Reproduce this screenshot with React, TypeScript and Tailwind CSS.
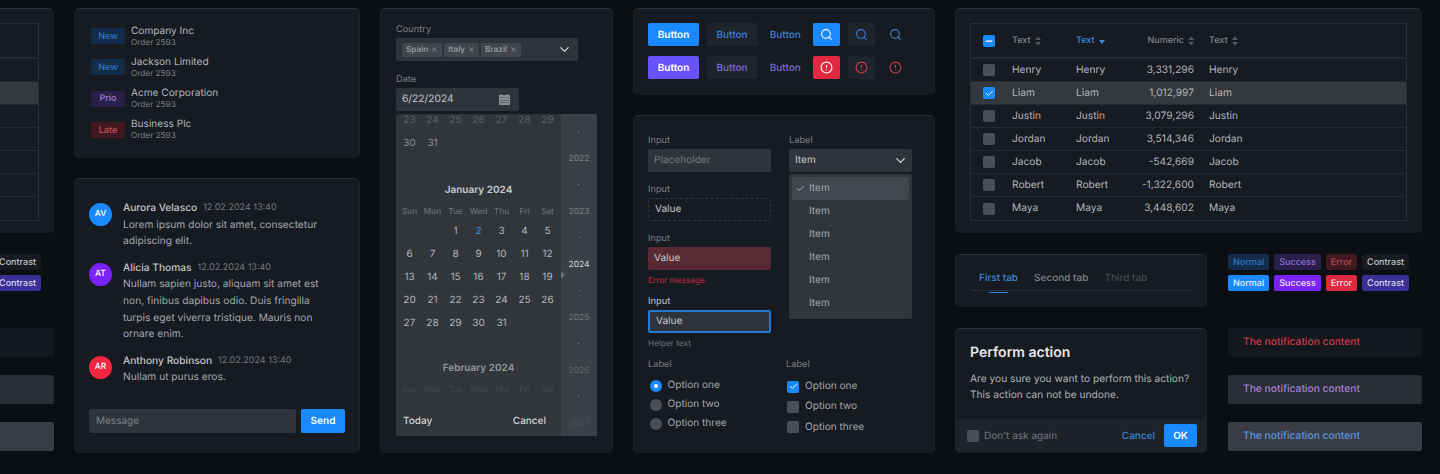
import { Check, ChevronDown, CircleAlert, Minus, Search, X } from "lucide-react";

const card = "rounded-[5px] border border-[#1f2329] border-t-[#2c3036] border-b-[#191d23] bg-[#161a21]";

const people = [
  ["Henry", "3,331,296"],
  ["Liam", "1,012,997"],
  ["Justin", "3,079,296"],
  ["Jordan", "3,514,346"],
  ["Jacob", "-542,669"],
  ["Robert", "-1,322,600"],
  ["Maya", "3,448,602"],
];

function SortIcon() {
  return (
    <svg width="6" height="10" viewBox="0 0 6 10" className="ml-[4px]" fill="#565b62">
      <path d="M3 0.5 6 4H0zM3 9.5 0 6h6z" />
    </svg>
  );
}

function CheckBox({ state, className = "" }: { state?: "on" | "mixed"; className?: string }) {
  return (
    <span
      className={`flex h-[12px] w-[12px] shrink-0 items-center justify-center rounded-[2px] ${
        state ? "bg-[#1a88ff]" : "bg-[#4a4e56]"
      } ${className}`}
    >
      {state === "on" && <Check size={9} strokeWidth={2.5} className="text-white" />}
      {state === "mixed" && <Minus size={10} strokeWidth={3} className="text-white" />}
    </span>
  );
}

function TableCard() {
  return (
    <div className={`${card} px-[14px] pt-[14px] pb-[14px] h-[225px]`}>
      <div className="border border-[#2a2e34] text-[10.2px] text-[#b3b6bb]">
        <div className="grid h-[35px] grid-cols-[41px_64px_60px_73px_1fr] items-center border-b-2 border-[#262a30] text-[9px] font-medium text-[#7f848b]">
          <span className="pl-[12px]">
            <CheckBox state="mixed" />
          </span>
          <span className="flex items-center">
            Text
            <SortIcon />
          </span>
          <span className="flex items-center text-[#3e8ae0]">
            Text
            <svg width="6" height="6" viewBox="0 0 6 6" className="mt-[3px] ml-[4px]" fill="#3e8ae0">
              <path d="M0 1h6L3 5z" />
            </svg>
          </span>
          <span className="col-span-1 flex items-center justify-end pr-[15px] whitespace-nowrap">
            Numeric
            <SortIcon />
          </span>
          <span className="flex items-center">
            Text
            <SortIcon />
          </span>
        </div>
        {people.map(([name, value], i) => (
          <div
            key={name}
            className={`grid h-[23px] grid-cols-[41px_64px_60px_73px_1fr] items-center ${
              i < people.length - 1 ? "border-b border-[#262a30]" : ""
            } ${i === 1 ? "bg-[#33383c]" : ""}`}
          >
            <span className="pl-[12px]">
              <CheckBox state={i === 1 ? "on" : undefined} />
            </span>
            <span className="pt-[1px]">{name}</span>
            <span className="pt-[1px]">{name}</span>
            <span className="pt-[1px] pr-[15px] text-right whitespace-nowrap">{value}</span>
            <span className="pt-[1px]">{name}</span>
          </div>
        ))}
      </div>
    </div>
  );
}

function Tags() {
  const base = "flex h-[16px] items-center rounded-[2px] px-[5px] pt-[1px] text-[9px] font-medium";
  return (
    <div className="flex flex-col gap-[5px]">
      <div className="flex gap-[5px]">
        <span className={`${base} bg-[#132c4b] text-[#2f76c4]`}>Normal</span>
        <span className={`${base} bg-[#2a1f4a] text-[#8a6fd1]`}>Success</span>
        <span className={`${base} bg-[#41191f] text-[#b24a57]`}>Error</span>
        <span className={`${base} bg-[#171a20] text-[#c2c4c7]`}>Contrast</span>
      </div>
      <div className="flex gap-[5px]">
        <span className={`${base} bg-[#1a88ff] text-[#e8f2ff]`}>Normal</span>
        <span className={`${base} bg-[#7b22fb] text-[#eee3ff]`}>Success</span>
        <span className={`${base} bg-[#e0283f] text-[#fbdde1]`}>Error</span>
        <span className={`${base} bg-[#3c2f93] text-[#d9d5f0]`}>Contrast</span>
      </div>
    </div>
  );
}

function Notifications() {
  const base = "flex h-[29px] items-center rounded-[2px] pt-[1px] pl-[15px] text-[10.25px] font-medium";
  return (
    <div className="mt-[37px] flex flex-col gap-[18px]">
      <div className={`${base} bg-[#14171e] text-[#c93b4c]`}>The notification content</div>
      <div className={`${base} bg-[#2a2d33] text-[#a480d8]`}>The notification content</div>
      <div className={`${base} bg-[#3a3d46] text-[#5b95e0]`}>The notification content</div>
    </div>
  );
}

function TabsCard() {
  return (
    <div className={`${card} h-[53px] px-[15px] pt-[13px]`}>
      <div className="flex h-[23px] gap-[16px] border-b border-[#2a2e34] pl-[8px] text-[10px] leading-[20px] font-medium">
        <span className="relative text-[#3a88dd]">
          First tab
          <span className="absolute right-[10px] -bottom-[3px] left-[10px] h-[1px] bg-[#2d82dc]" />
        </span>
        <span className="text-[#7b8087]">Second tab</span>
        <span className="text-[#474b52]">Third tab</span>
      </div>
    </div>
  );
}

function DialogCard() {
  return (
    <div className={`${card} flex h-[125px] flex-col overflow-hidden`}>
      <div className="flex-1 px-[14px] pt-[14px]">
        <h3 className="text-[14px] leading-[20px] font-semibold text-[#e6e7e8]">Perform action</h3>
        <p className="mt-[8px] text-[10.2px] leading-[16px] text-[#b0b3b8]">
          Are you sure you want to perform this action?
          <br />
          This action can not be undone.
        </p>
      </div>
      <div className="flex h-[33px] items-center bg-[#1e2229] pr-[9px] pl-[11px] text-[10px]">
        <CheckBox />
        <span className="ml-[5px] pt-[1px] text-[#71767d]">Don't ask again</span>
        <span className="ml-auto pt-[1px] font-medium text-[#3a82d6]">Cancel</span>
        <span className="ml-[9px] flex h-[23px] w-[33px] items-center justify-center rounded-[2px] bg-[#1a88ff] pt-[1px] font-semibold text-white">
          OK
        </span>
      </div>
    </div>
  );
}

function TableColumn() {
  return (
    <div className="flex w-[467px] shrink-0 flex-col gap-[21px]">
      <TableCard />
      <div className="flex gap-[21px]">
        <div className="flex w-[252px] shrink-0 flex-col gap-[21px]">
          <TabsCard />
          <DialogCard />
        </div>
        <div className="flex-1">
          <Tags />
          <Notifications />
        </div>
      </div>
    </div>
  );
}

const orders = [
  ["New", "Company Inc", "bg-[#132c4b] text-[#2f76c4]"],
  ["New", "Jackson Limited", "bg-[#132c4b] text-[#2f76c4]"],
  ["Prio", "Acme Corporation", "bg-[#2a1f4a] text-[#a07fd8]"],
  ["Late", "Business Plc", "bg-[#41191f] text-[#c9505e]"],
];

const messages = [
  {
    initials: "AV",
    color: "bg-[#1a88ff]",
    name: "Aurora Velasco",
    text: "Lorem ipsum dolor sit amet, consectetur adipiscing elit.",
  },
  {
    initials: "AT",
    color: "bg-[#7b22fb]",
    name: "Alicia Thomas",
    text: "Nullam sapien justo, aliquam sit amet est non, finibus dapibus odio. Duis fringilla turpis eget viverra tristique. Mauris non ornare enim.",
  },
  {
    initials: "AR",
    color: "bg-[#f5263f]",
    name: "Anthony Robinson",
    text: "Nullam ut purus eros.",
  },
];

function ListColumn() {
  return (
    <div className="flex w-[286px] shrink-0 flex-col gap-[20px]">
      <div className={`${card} flex h-[150px] flex-col gap-[3.3px] pt-[13px] pl-[16px]`}>
        {orders.map(([tag, name, color]) => (
          <div key={name} className="flex h-[28px] items-center">
            <span
              className={`flex h-[16px] w-[34px] items-center justify-center rounded-[2px] pt-[1px] text-[9px] font-medium ${color}`}
            >
              {tag}
            </span>
            <div className="ml-[6px]">
              <div className="text-[10.1px] leading-[12px] text-[#b3b6bb]">{name}</div>
              <div className="text-[8.25px] leading-[11px] text-[#7b8087]">Order 2593</div>
            </div>
          </div>
        ))}
      </div>
      <div className={`${card} h-[275px] px-[14px] pt-[21px]`}>
        <div className="flex flex-col gap-[10px]">
          {messages.map((m) => (
            <div key={m.name} className="flex gap-[11px]">
              <span
                className={`mt-[3px] flex h-[23px] w-[23px] shrink-0 items-center justify-center rounded-full text-[8.5px] font-medium text-white ${m.color}`}
              >
                {m.initials}
              </span>
              <div className="w-[202px] text-[10.2px] leading-[16.6px] text-[#a4a7ad]">
                <div className="flex gap-[6px]">
                  <span className="font-medium text-[#c4c6ca]">{m.name}</span>
                  <span className="text-[9px] text-[#74797f]">12.02.2024 13:40</span>
                </div>
                {m.text}
              </div>
            </div>
          ))}
        </div>
        <div className="mt-[23px] flex gap-[5px]">
          <div className="flex h-[24px] w-[207px] items-center rounded-[2px] bg-[#30343a] pt-[1.5px] pl-[7px] text-[10px] text-[#7b8087]">
            Message
          </div>
          <div className="flex h-[24px] w-[44px] items-center justify-center rounded-[2px] bg-[#1a88ff] pt-[1.5px] text-[10px] font-semibold text-white">
            Send
          </div>
        </div>
      </div>
    </div>
  );
}

const weekdays = ["Sun", "Mon", "Tue", "Wed", "Thu", "Fri", "Sat"];
const dayCell = "flex h-[23px] w-[23px] items-center justify-center";

function Weekdays({ className }: { className: string }) {
  return (
    <div className={`flex h-[16px] items-center text-[8.25px] ${className}`}>
      {weekdays.map((d) => (
        <span key={d} className="w-[23px] text-center">
          {d}
        </span>
      ))}
    </div>
  );
}

function DayRow({ days, className = "" }: { days: (number | string)[]; className?: string }) {
  return (
    <div className={`flex ${className}`}>
      {days.map((d, i) => (
        <span key={i} className={`${dayCell} ${d === 2 ? "text-[#3e8ae0]" : ""}`}>
          {d}
        </span>
      ))}
    </div>
  );
}

function CalendarPopup() {
  return (
    <div className="mt-[3px] flex h-[322px] w-[201px] overflow-hidden rounded-[2px] bg-[#32363b]">
      <div className="relative w-[165px] shrink-0 overflow-hidden px-[2px] text-[10px] text-[#b3b6bb]">
        <div className="-mt-[5px]">
          <DayRow days={[23, 24, 25, 26, 27, 28, 29]} className="text-[#5c6066]" />
          <DayRow days={[30, 31, "", "", "", "", ""]} className="text-[#8b8f94]" />
        </div>
        <div className="mt-[27px] text-center text-[10px] leading-[16px] font-semibold text-[#c9cbce]">January 2024</div>
        <Weekdays className="mt-[5px] text-[#74797f]" />
        <div className="mt-[1px]">
          <DayRow days={["", "", 1, 2, 3, 4, 5]} />
          <DayRow days={[6, 7, 8, 9, 10, 11, 12]} />
          <DayRow days={[13, 14, 15, 16, 17, 18, 19]} />
          <DayRow days={[20, 21, 22, 23, 24, 25, 26]} />
          <DayRow days={[27, 28, 29, 30, 31, "", ""]} />
        </div>
        <div className="mt-[25px] text-center text-[10px] leading-[16px] font-semibold text-[#94979c]">February 2024</div>
        <Weekdays className="mt-[5px] text-[#45494f]" />
        <div className="mt-[17px] flex justify-between px-[5px] text-[10px] font-medium text-[#d3d4d6]">
          <span>Today</span>
          <span className="pr-[8px]">Cancel</span>
        </div>
      </div>
      <div className="relative flex w-[36px] shrink-0 flex-col items-center bg-[#3b3f46] pt-[17px] text-[8.5px] text-[#7e8288]">
        {[
          ["2022", "text-[#7e8288]"],
          ["2023", "text-[#7e8288]"],
          ["2024", "text-[#d8d9db]"],
          ["2025", "text-[#73777d]"],
          ["2026", "text-[#62666c]"],
          ["2027", "text-[#4c5056]"],
        ].map(([year, color]) => (
          <div key={year} className="flex h-[53px] shrink-0 flex-col items-center">
            <span className="h-[1px] w-[1px] bg-[#7e8288]" />
            <span className={`mt-[21px] leading-[12px] ${color}`}>{year}</span>
          </div>
        ))}
        <span className="absolute top-[157px] left-0 h-0 w-0 border-y-[4px] border-l-[4px] border-y-transparent border-l-[#6d7177]" />
      </div>
    </div>
  );
}

function DateColumn() {
  return (
    <div className={`${card} flex h-[445px] w-[233px] shrink-0 flex-col pt-[14px] pl-[15px]`}>
      <div className="text-[9.25px] leading-[14px] text-[#7b8087]">Country</div>
      <div className="mt-[1px] flex h-[23px] w-[182px] items-center rounded-[2px] bg-[#30343a] pr-[6.5px] pl-[6px] text-[8.25px] font-medium text-[#9fa3a8]">
        <div className="flex gap-[2px]">
          {["Spain", "Italy", "Brazil"].map((c) => (
            <span key={c} className="flex h-[14px] items-center gap-[3px] rounded-[2px] bg-[#42464c] px-[4px]">
              {c}
              <X size={7} strokeWidth={2} className="text-[#b3b6bb]" />
            </span>
          ))}
        </div>
        <ChevronDown size={15} strokeWidth={2} className="ml-auto text-[#d3d4d6]" />
      </div>
      <div className="mt-[12px] text-[9.25px] leading-[14px] text-[#7b8087]">Date</div>
      <div className="mt-[1px] flex h-[23px] w-[123px] items-center justify-between rounded-[2px] bg-[#30343a] pr-[9px] pl-[6px] text-[10.25px] text-[#c4c6ca]">
        <span className="pt-[1px]">6/22/2024</span>
        <svg width="11" height="11" viewBox="0 0 11 11" fill="#8b8f94">
          <path d="M2 0h1v1h5V0h1v1h2v10H0V1h2zM1 3.5V4h1.5v-.5zM3.3 3.5V4h1.5v-.5zM5.7 3.5V4h1.5v-.5zM8 3.5V4h2v-.5zM1 6v.6h9V6zM1 8.4V9h9v-.6z" fillRule="evenodd" />
        </svg>
      </div>
      <CalendarPopup />
    </div>
  );
}

function ButtonsCard() {
  const btn = "flex h-[23px] items-center justify-center rounded-[2px] pt-[1px] text-[10px] font-medium";
  const icon = "flex h-[23px] w-[27px] items-center justify-center rounded-[2px]";
  return (
    <div className={`${card} flex h-[87px] flex-col gap-[10px] px-[14px] pt-[14px]`}>
      <div className="flex gap-[7.5px]">
        <span className={`${btn} w-[51px] bg-[#1a88ff] font-semibold text-white`}>Button</span>
        <span className={`${btn} w-[51px] bg-[#1f232c] text-[#3a82d6]`}>Button</span>
        <span className={`${btn} w-[40.5px] text-[#3a82d6]`}>Button</span>
        <span className={`${icon} bg-[#1a88ff] text-white`}>
          <Search size={13} strokeWidth={2} />
        </span>
        <span className={`${icon} bg-[#1f232c] text-[#3a82d6]`}>
          <Search size={13} strokeWidth={2} />
        </span>
        <span className={`${icon} text-[#3a82d6]`}>
          <Search size={13} strokeWidth={2} />
        </span>
      </div>
      <div className="flex gap-[7.5px]">
        <span className={`${btn} w-[51px] bg-[#6a52ff] font-semibold text-white`}>Button</span>
        <span className={`${btn} w-[51px] bg-[#1f232c] text-[#7f6ad8]`}>Button</span>
        <span className={`${btn} w-[40.5px] text-[#7f6ad8]`}>Button</span>
        <span className={`${icon} bg-[#e0283f] text-white`}>
          <CircleAlert size={13} strokeWidth={2} />
        </span>
        <span className={`${icon} bg-[#1f232c] text-[#cf3d4f]`}>
          <CircleAlert size={13} strokeWidth={2} />
        </span>
        <span className={`${icon} text-[#cf3d4f]`}>
          <CircleAlert size={13} strokeWidth={2} />
        </span>
      </div>
    </div>
  );
}

function Field({
  label,
  value,
  className,
  labelClass = "text-[#7b8087]",
  mt = "",
}: {
  label: string;
  value: string;
  className: string;
  labelClass?: string;
  mt?: string;
}) {
  return (
    <div className={mt}>
      <div className={`text-[9.25px] leading-[15px] ${labelClass}`}>{label}</div>
      <div className={`mt-[1px] flex h-[23px] items-center rounded-[2px] pt-[1px] pl-[6px] text-[10.1px] ${className}`}>{value}</div>
    </div>
  );
}

function FormCard() {
  return (
    <div className={`${card} h-[338px] px-[14px] pt-[17px]`}>
      <div className="grid grid-cols-[123px_123px] gap-x-[18px]">
        <div>
          <Field label="Input" value="Placeholder" className="bg-[#30343a] text-[#73777d]" />
          <Field
            label="Input"
            value="Value"
            mt="mt-[10px]"
            className="border border-dashed border-[#33373d] text-[#c4c6ca]"
          />
          <Field label="Input" value="Value" mt="mt-[10px]" className="bg-[#582b34] text-[#c4c6ca]" />
          <div className="mt-[4px] text-[8.25px] leading-[12px] text-[#c92a3f]">Error message</div>
          <Field
            label="Input"
            value="Value"
            mt="mt-[8px]"
            labelClass="font-medium text-[#b3b6bb]"
            className="border-2 border-[#2577cf] bg-[#30343a] text-[#c4c6ca]"
          />
          <div className="mt-[4px] text-[8.25px] leading-[12px] text-[#71767d]">Helper text</div>
        </div>
        <div>
          <div className="text-[9.25px] leading-[15px] text-[#7b8087]">Label</div>
          <div className="mt-[1px] flex h-[23px] items-center justify-between rounded-[2px] bg-[#30343a] pr-[4.5px] pl-[6px] text-[10.1px] text-[#c4c6ca]">
            <span className="pt-[1px]">Item</span>
            <ChevronDown size={15} strokeWidth={2} className="text-[#d3d4d6]" />
          </div>
          <div className="mt-[2px] flex h-[145px] flex-col rounded-[2px] bg-[#32363b] p-[3px] text-[10.1px] text-[#a4a7ad]">
            {[0, 1, 2, 3, 4, 5].map((i) => (
              <div
                key={i}
                className={`flex h-[23px] shrink-0 items-center rounded-[2px] pl-[4px] ${i === 0 ? "bg-[#42464d]" : ""}`}
              >
                <span className="flex w-[13px]">{i === 0 && <Check size={9} strokeWidth={2} className="text-[#c4c6ca]" />}</span>
                <span className="pt-[1px]">Item</span>
              </div>
            ))}
          </div>
        </div>
      </div>
      <div className="mt-[9px] grid grid-cols-[138px_1fr] text-[10.1px] text-[#a4a7ad]">
        <div>
          <div className="text-[9.25px] leading-[14px] text-[#7b8087]">Label</div>
          <div className="mt-[6px] flex flex-col gap-[4px]">
            {["Option one", "Option two", "Option three"].map((o, i) => (
              <div key={o} className="flex h-[15px] items-center pl-[2px]">
                <span
                  className={`flex h-[12px] w-[12px] items-center justify-center rounded-full ${
                    i === 0 ? "bg-[#1a88ff]" : "bg-[#4a4e56]"
                  }`}
                >
                  {i === 0 && <span className="h-[4px] w-[4px] rounded-full bg-white" />}
                </span>
                <span className="ml-[5.5px]">{o}</span>
              </div>
            ))}
          </div>
        </div>
        <div>
          <div className="text-[9.25px] leading-[14px] text-[#7b8087]">Label</div>
          <div className="mt-[7px] flex flex-col gap-[5.3px]">
            {["Option one", "Option two", "Option three"].map((o, i) => (
              <div key={o} className="flex h-[15px] items-center pl-[1px]">
                <CheckBox state={i === 0 ? "on" : undefined} />
                <span className="ml-[6px]">{o}</span>
              </div>
            ))}
          </div>
        </div>
      </div>
    </div>
  );
}

export default function App() {
  return (
    <div className="flex h-[474px] w-[1440px] overflow-hidden bg-[#0b0e13] font-['Inter',sans-serif] antialiased [text-rendering:geometricPrecision]">
      <div className="-ml-[413px] flex shrink-0 gap-[20px] pt-[8px]">
        <TableColumn />
        <ListColumn />
        <DateColumn />
        <div className="flex w-[302px] shrink-0 flex-col gap-[20px]">
          <ButtonsCard />
          <FormCard />
        </div>
        <TableColumn />
      </div>
    </div>
  );
}
